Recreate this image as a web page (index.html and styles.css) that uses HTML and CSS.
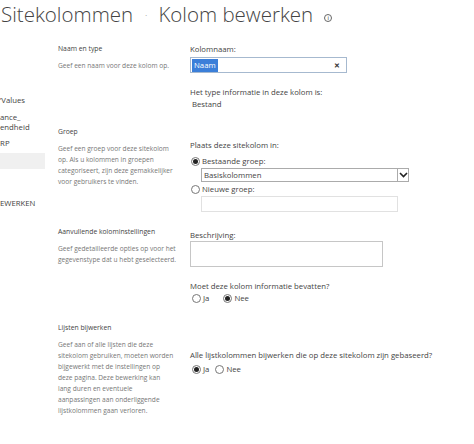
FILE: index.html
```html
<!DOCTYPE html>
<html lang="nl">
<head>
<meta charset="utf-8">
<title>Kolom bewerken</title>
<link rel="stylesheet" href="styles.css">
</head>
<body>
<div class="page">
  <h1 class="title">
    <span>Sitekolommen</span><span class="sep">&#8226;</span><span>Kolom bewerken</span><span class="info">i</span>
  </h1>
  <div class="main">
    <nav class="nav">
      <div class="nav-item first">&#8217;Values</div>
      <div class="nav-item gap">ance_</div>
      <div class="nav-item">endheid</div>
      <div class="nav-item gap2">RP</div>
      <div class="nav-sel"></div>
      <div class="nav-item gap3">EWERKEN</div>
    </nav>
    <div class="form">
      <section class="row row1">
        <div class="desc">
          <h2 class="desc-head">Naam en type</h2>
          <p class="desc-text">Geef een naam voor deze kolom op.</p>
        </div>
        <div class="ctrl ctrl1">
          <div class="label">Kolomnaam:</div>
          <div class="input name-input"><span class="selected">Naam</span><span class="clear">&#10005;</span></div>
          <div class="label mt13">Het type informatie in deze kolom is:</div>
          <div class="label indent">Bestand</div>
        </div>
      </section>
      <section class="row row2">
        <div class="desc">
          <h2 class="desc-head">Groep</h2>
          <p class="desc-text">Geef een groep voor deze sitekolom<br>op. Als u kolommen in groepen<br>categoriseert, zijn deze gemakkelijker<br>voor gebruikers te vinden.</p>
        </div>
        <div class="ctrl ctrl2">
          <div class="label">Plaats deze sitekolom in:</div>
          <div class="radio-line mt4"><span class="radio on"></span><span>Bestaande groep:</span></div>
          <div class="select"><span>Basiskolommen</span><span class="arrow"><svg width="9" height="6" viewBox="0 0 9 6"><path d="M1 1l3.5 3.5L8 1" fill="none" stroke="#222" stroke-width="1.6"/></svg></span></div>
          <div class="radio-line mt1"><span class="radio"></span><span>Nieuwe groep:</span></div>
          <div class="input group-input"></div>
        </div>
      </section>
      <section class="row row3">
        <div class="desc">
          <h2 class="desc-head">Aanvullende kolominstellingen</h2>
          <p class="desc-text">Geef gedetailleerde opties op voor het<br>gegevenstype dat u hebt geselecteerd.</p>
        </div>
        <div class="ctrl ctrl3">
          <div class="label">Beschrijving:</div>
          <div class="textarea"></div>
          <div class="label mt13">Moet deze kolom informatie bevatten?</div>
          <div class="radio-line yn"><span class="radio"></span><span>Ja</span><span class="radio on sp"></span><span>Nee</span></div>
        </div>
      </section>
      <section class="row row4">
        <div class="desc">
          <h2 class="desc-head">Lijsten bijwerken</h2>
          <p class="desc-text">Geef aan of alle lijsten die deze<br>sitekolom gebruiken, moeten worden<br>bijgewerkt met de instellingen op<br>deze pagina. Deze bewerking kan<br>lang duren en eventuele<br>aanpassingen aan onderliggende<br>lijstkolommen gaan verloren.</p>
        </div>
        <div class="ctrl ctrl4">
          <div class="label">Alle lijstkolommen bijwerken die op deze sitekolom zijn gebaseerd?</div>
          <div class="radio-line yn mt2"><span class="radio on"></span><span>Ja</span><span class="radio sp-sm"></span><span>Nee</span></div>
        </div>
      </section>
    </div>
  </div>
</div>
</body>
</html>
```

FILE: styles.css
```css
* { box-sizing: border-box; }
html, body { margin: 0; padding: 0; background: #fff; }
body {
  font-family: "Open Sans", "Noto Sans", "Liberation Sans", sans-serif;
  color: #444;
  width: 474px;
  height: 444px;
  overflow: hidden;
}
.page { padding: 0; }

.title {
  margin: 0 0 9px 0;
  padding-left: 1px;
  font-size: 20.5px;
  font-weight: 300;
  line-height: 28px;
  color: #444;
  white-space: nowrap;
  display: flex;
  align-items: baseline;
}
.title .sep {
  font-size: 6px;
  color: #aaa;
  margin: 0 11px 0 12px;
  position: relative;
  top: -4px;
}
.title .info {
  display: inline-flex;
  align-items: center;
  justify-content: center;
  width: 8px;
  height: 8px;
  border: 1px solid #666;
  border-radius: 50%;
  font-size: 5px;
  line-height: 1;
  font-weight: 600;
  color: #555;
  margin-left: 11px;
  align-self: center;
  position: relative;
  top: 1px;
}

.main {
  display: grid;
  grid-template-columns: 45px 1fr;
  column-gap: 13px;
}

.nav {
  padding-top: 51px;
  font-size: 7.75px;
  color: #444;
  overflow: hidden;
  white-space: nowrap;
}
.nav-item { line-height: 10px; }
.nav-item.first { line-height: 12px; }
.nav-item.gap { margin-top: 6px; }
.nav-item.gap2 { margin-top: 6px; letter-spacing: 0.2px; }
.nav-sel { height: 16px; background: #f0f0f0; margin-top: 5px; }
.nav-item.gap3 { margin-top: 29px; }

.row {
  display: grid;
  grid-template-columns: 132px 1fr;
}
.row1 { margin-bottom: 16px; }
.row2 { margin-bottom: 14px; }
.row3 { margin-bottom: 18px; }

.desc { padding-top: 1px; }
.desc-head {
  margin: 0;
  font-size: 6.8px;
  font-weight: 400;
  line-height: 10px;
  color: #444;
}
.desc-text {
  margin: 6px 0 0 0;
  font-size: 6.6px;
  line-height: 11px;
  color: #777;
  white-space: nowrap;
}

.ctrl { font-size: 7.75px; color: #444; }
.ctrl1 { padding-top: 0; }
.ctrl2 { padding-top: 13px; }
.ctrl3 { padding-top: 3px; }
.ctrl4 { padding-top: 27px; }

.label { line-height: 12px; white-space: nowrap; }
.indent { padding-left: 2px; }
.mt13 { margin-top: 13px; }
.mt4 { margin-top: 4px; }
.mt2 { margin-top: 2px; }
.mt1 { margin-top: 1px; }

.input {
  border: 1px solid #ababab;
  background: #fff;
  height: 16px;
}
.name-input {
  margin-top: 2px;
  width: 157px;
  display: flex;
  align-items: center;
  padding: 0 6px 0 1px;
  border-color: #a6b9cf;
}
.selected {
  background: #3b7fd9;
  color: #fff;
  line-height: 13px;
  padding: 0 2px;
  font-size: 7.75px;
}
.clear {
  margin-left: auto;
  font-size: 7px;
  font-weight: 700;
  color: #333;
}

.radio-line {
  display: flex;
  align-items: center;
  line-height: 12px;
  white-space: nowrap;
}
.radio {
  width: 9px;
  height: 9px;
  border: 1px solid #777;
  border-radius: 50%;
  margin: 0 2px 0 1px;
  display: inline-flex;
  align-items: center;
  justify-content: center;
  flex: none;
  background: #fff;
}
.radio.on::after {
  content: "";
  width: 5px;
  height: 5px;
  border-radius: 50%;
  background: #222;
}
.yn .radio:first-child { margin-left: 2px; }
.radio.sp { margin-left: 14px; }
.radio.sp-sm { margin-left: 6px; }

.select {
  margin: 1px 0 0 11px;
  width: 208px;
  height: 14px;
  border: 1px solid #ababab;
  display: flex;
  align-items: center;
  padding-left: 2px;
  line-height: 12px;
}
.select .arrow {
  margin-left: auto;
  width: 11px;
  height: 12px;
  border-left: 1px solid #ababab;
  display: flex;
  align-items: center;
  justify-content: center;
}
.group-input {
  margin: 1px 0 0 11px;
  width: 197px;
  height: 16px;
  border-color: #e1e1e1;
}
.textarea {
  width: 193px;
  height: 26px;
  border: 1px solid #c6c6c6;
}
```
